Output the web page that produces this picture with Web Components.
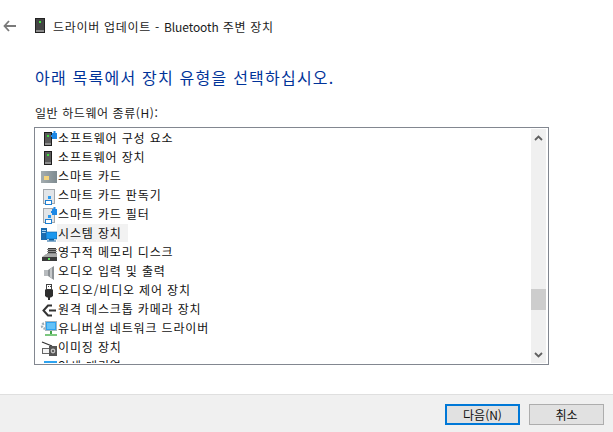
<!DOCTYPE html>
<html lang="ko">
<head>
<meta charset="utf-8">
<title>드라이버 업데이트</title>
<style>
	html, body {
		margin: 0;
		height: 100%;
		background: #fff;
		font-family: "Noto Sans CJK KR", "Liberation Sans", sans-serif;
	}
</style>
</head>
<body>
<driver-wizard>
	<wizard-title slot="title">드라이버 업데이트 - <span style="letter-spacing:-.1px">Bluetooth</span> 주변 장치</wizard-title>
	<span slot="heading">아래 목록에서 장치 유형을 선택하십시오.</span>
	<span slot="label">일반 하드웨어 종류(H):</span>
	<hardware-list slot="list">
		<hardware-row icon="softpart">소프트웨어 구성 요소</hardware-row>
		<hardware-row icon="soft">소프트웨어 장치</hardware-row>
		<hardware-row icon="card">스마트 카드</hardware-row>
		<hardware-row icon="reader">스마트 카드 판독기</hardware-row>
		<hardware-row icon="filter">스마트 카드 필터</hardware-row>
		<hardware-row icon="system" hover>시스템 장치</hardware-row>
		<hardware-row icon="disk">영구적 메모리 디스크</hardware-row>
		<hardware-row icon="audio">오디오 입력 및 출력</hardware-row>
		<hardware-row icon="usb">오디오/비디오 제어 장치</hardware-row>
		<hardware-row icon="remote">원격 데스크톱 카메라 장치</hardware-row>
		<hardware-row icon="network">유니버설 네트워크 드라이버</hardware-row>
		<hardware-row icon="camera">이미징 장치</hardware-row>
		<hardware-row icon="monitor">인쇄 대기열</hardware-row>
	</hardware-list>
	<wizard-button slot="next" primary>다음(N)</wizard-button>
	<wizard-button slot="cancel">취소</wizard-button>
</driver-wizard>

<script>
// device tower, used in the software rows
const TOWER = `<rect x="3" y="1" width="8" height="14" fill="#1e1e1e"/><rect x="4" y="2" width="6" height="10" fill="#5a5a5a"/><rect x="6" y="4" width="2" height="2" fill="#3fe03f"/><rect x="4" y="12" width="6" height="2" fill="#8c8c8c"/>`;
const PUZZLE = `<path d="M11 2h1.500V0h2v2H16v6h-5V6h-1V4h1z" fill="#1e88e5"/>`;
const READER = `<rect x="2.500" y="1.500" width="11" height="14" fill="#e2e5e8" stroke="#a4a8ac"/><rect x="7" y="8" width="3" height="3" fill="#2a9af0"/><rect x="4.500" y="12.500" width="6" height="4" fill="#fff" stroke="#1f7fd0"/>`;

const ICONS = {
	softpart: TOWER + PUZZLE,
	soft: TOWER,
	card: `<defs><linearGradient id="c" x1="0" x2="1"><stop offset="0" stop-color="#a4adb0"/><stop offset="1" stop-color="#7f8b90"/></linearGradient></defs><rect x="0" y="2" width="16" height="12" fill="url(#c)"/><rect x="3" y="7" width="5" height="4" fill="#f5d47c"/>`,
	reader: READER,
	filter: READER + PUZZLE,
	system: `<rect x="0" y="2" width="6" height="12" fill="#1b6cb0"/><rect x="1" y="4" width="4" height="1" fill="#a9d6f5"/><rect x="1" y="6" width="4" height="1" fill="#a9d6f5"/><rect x="5" y="6" width="11" height="7" fill="#1b97ee" stroke="#0f5f9e" stroke-width=".6"/><rect x="8" y="13" width="5" height="1.500" fill="#0f5f9e"/><rect x="6" y="14.500" width="9" height="1" fill="#0f5f9e"/>`,
	disk: `<rect x="7" y="3" width="8" height="6" fill="#3c3c3c"/><path d="M6 4.500h10M6 6.500h10M6 8.500h10" stroke="#8f8f8f"/><path d="M1 12 5 9h11v3z" fill="#a8a8a8"/><rect x="1" y="12" width="15" height="4" fill="#3a3a3a"/><rect x="7" y="13" width="2" height="2" fill="#5fe05f"/>`,
	audio: `<rect x="3" y="6" width="4" height="6" fill="#b7bbbe"/><path d="M7 6l6-4v14l-6-4z" fill="#8d9296"/><path d="M9 5l2-1.300v10.600L9 13z" fill="#c6c9cb"/>`,
	usb: `<rect x="5.500" y="1.500" width="5" height="5" fill="#fff" stroke="#444"/><rect x="7" y="3" width="1" height="1" fill="#444"/><rect x="9" y="3" width="1" height="1" fill="#444"/><path d="M4 6.500h8V13l-2 1.500H6L4 13z" fill="#2e2e2e"/><rect x="7" y="14" width="2" height="3" fill="#2e2e2e"/>`,
	remote: `<path d="M11 3.500H7L2.500 8.500 7 13.500h4" fill="none" stroke="#333" stroke-width="2"/><path d="M8 8.500h7" stroke="#333" stroke-width="2"/>`,
	network: `<circle cx="3.500" cy="5" r="2.500" fill="none" stroke="#9fb0ba" stroke-width="2.400" stroke-dasharray="2 1"/><rect x="4.500" y="0.500" width="11" height="9" fill="#2ea3f0" stroke="#a5b6c0"/><rect x="6" y="2" width="8" height="6" fill="#64c2f7"/><rect x="9" y="10" width="2" height="3" fill="#3fa648"/><rect x="4" y="13" width="12" height="2" fill="#7cc77f"/>`,
	camera: `<path d="M1 2l10 4" stroke="#333" stroke-width="1.200"/><rect x="1.500" y="8.500" width="7" height="5" fill="#f4f4f4" stroke="#666"/><rect x="8" y="6" width="8" height="10" fill="#555"/><circle cx="12" cy="11" r="2.400" fill="#c2c2c2"/><circle cx="12" cy="11" r="1" fill="#444"/>`,
	monitor: `<rect x="3" y="2" width="13" height="6" fill="#2ea3f0"/><rect x="0" y="4" width="5" height="1" fill="#7fa8b8"/>`,
};

class WizardTitle extends HTMLElement {
	constructor() {
		super();
		this.attachShadow({ mode: 'open' }).innerHTML = `
			<style>
				:host { display: flex; align-items: center; height: 18px; color: #1b1b1b; font-size: 12px; letter-spacing: .7px; white-space: pre; }
				svg { width: 10px; height: 16px; margin-right: 8px; flex: none; }
				div { display: block; }
			</style>
			<svg viewBox="0 0 10 16"><rect x="0" y="0" width="10" height="15" fill="#222"/><rect x="1" y="1" width="8" height="11" fill="#444"/><rect x="4" y="3" width="2" height="2" fill="#3fe03f"/><rect x="1" y="12" width="8" height="2" fill="#8c8c8c"/></svg><div><slot></slot></div>`;
	}
}
customElements.define('wizard-title', WizardTitle);

class HardwareRow extends HTMLElement {
	constructor() {
		super();
		const icon = ICONS[this.getAttribute('icon')] || '';
		this.attachShadow({ mode: 'open' }).innerHTML = `
			<style>
				:host { display: flex; align-items: flex-start; height: 19px; font-size: 12px; letter-spacing: .85px; color: #111; white-space: nowrap; }
				svg { width: 16px; height: 16px; flex: none; overflow: visible; margin-top: 1.500px; }
				span { display: block; padding: 0 6px 0 1px; margin-left: 0; line-height: 18px; height: 18px; }
				:host([hover]) span { background: #f2f2f2; }
			</style>
			<svg viewBox="0 0 16 16">${icon}</svg><span><slot></slot></span>`;
	}
}
customElements.define('hardware-row', HardwareRow);

class HardwareList extends HTMLElement {
	constructor() {
		super();
		this.attachShadow({ mode: 'open' }).innerHTML = `
			<style>
				:host { display: flex; box-sizing: border-box; width: 515px; height: 238px; border: 1px solid #828790; background: #fff; padding: 1px 2px 1px 1px; }
				.rows { flex: 1; overflow: hidden; padding: 0 0 0 5px; }
				.bar { width: 15px; display: flex; flex-direction: column; background: #f0f0f0; }
				.arrow { height: 17px; display: flex; align-items: center; justify-content: center; flex: none; }
				.track { flex: 1; display: flex; flex-direction: column; }
				.thumb { height: 21px; margin-top: 143px; background: #cdcdcd; }
				svg { width: 9px; height: 6px; }
			</style>
			<div class="rows"><slot></slot></div>
			<div class="bar">
				<div class="arrow"><svg viewBox="0 0 9 6"><path d="M1 5l3.500-3.500L8 5" fill="none" stroke="#606060" stroke-width="1.800"/></svg></div>
				<div class="track"><div class="thumb"></div></div>
				<div class="arrow"><svg viewBox="0 0 9 6"><path d="M1 1l3.500 3.500L8 1" fill="none" stroke="#606060" stroke-width="1.800"/></svg></div>
			</div>`;
	}
}
customElements.define('hardware-list', HardwareList);

class WizardButton extends HTMLElement {
	constructor() {
		super();
		this.attachShadow({ mode: 'open' }).innerHTML = `
			<style>
				:host { display: flex; align-items: center; justify-content: center; box-sizing: border-box; width: 75px; height: 21px; border: 1px solid #adadad; background: #e1e1e1; font-size: 12px; color: #111; }
				:host([primary]) { border: 2px solid #0078d7; }
			</style>
			<slot></slot>`;
	}
}
customElements.define('wizard-button', WizardButton);

class DriverWizard extends HTMLElement {
	constructor() {
		super();
		this.attachShadow({ mode: 'open' }).innerHTML = `
			<style>
				:host { display: flex; flex-direction: column; width: 613px; height: 432px; background: #fff; }
				.top { display: flex; align-items: center; height: 18px; padding: 17px 0 0 3px; }
				.top svg { width: 13px; height: 12px; margin-right: 19px; flex: none; }
				main { flex: 1; padding: 0 0 0 34px; }
				.heading { font-size: 16px; color: #003399; letter-spacing: 1.22px; line-height: 24px; margin-top: 30px; height: 24px; padding-left: 1px; white-space: nowrap; }
				.label { font-size: 12px; color: #1b1b1b; letter-spacing: .58px; line-height: 16px; margin-top: 16px; margin-bottom: 6px; padding-left: 1px; }
				footer { display: flex; justify-content: flex-end; gap: 9px; box-sizing: border-box; height: 38px; padding: 9px 9px 0 0; background: #f0f0f0; border-top: 1px solid #dfdfdf; }
			</style>
			<div class="top">
				<svg viewBox="0 0 13 12"><path d="M6 1 1.500 6 6 11M2 6h11" fill="none" stroke="#7a7a7a" stroke-width="1.800"/></svg>
				<slot name="title"></slot>
			</div>
			<main>
				<div class="heading"><slot name="heading"></slot></div>
				<div class="label"><slot name="label"></slot></div>
				<slot name="list"></slot>
			</main>
			<footer><slot name="next"></slot><slot name="cancel"></slot></footer>`;
	}
}
customElements.define('driver-wizard', DriverWizard);
</script>
</body>
</html>
